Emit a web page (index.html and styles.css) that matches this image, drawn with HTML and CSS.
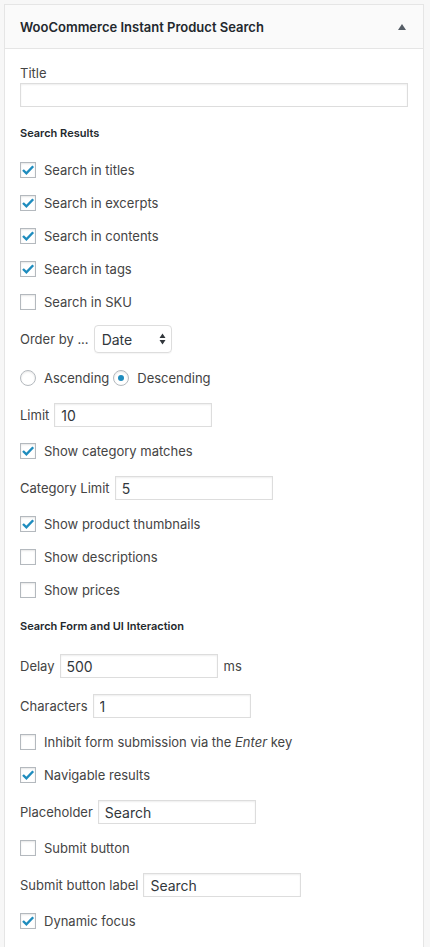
FILE: index.html
```html
<!DOCTYPE html>
<html lang="en">
<head>
<meta charset="utf-8">
<title>WooCommerce Instant Product Search</title>
<link rel="stylesheet" href="styles.css">
</head>
<body>
<div class="widget">
  <div class="widget-top">
    <h3 class="widget-title">WooCommerce Instant Product Search</h3>
    <svg class="toggle" width="8" height="6" viewBox="0 0 8 6"><path d="M0 6 L4 0 L8 6 Z" fill="#555d66"/></svg>
  </div>
  <div class="widget-inside">
    <div class="label-row">Title</div>
    <input class="text full" type="text" value="">

    <h4 class="section">Search Results</h4>
    <label class="row cb"><span class="box"><svg viewBox="0 0 16 16"><path d="M3 8 L6.4 11.4 L13.2 4.2"/></svg></span>Search in titles</label>
    <label class="row cb"><span class="box"><svg viewBox="0 0 16 16"><path d="M3 8 L6.4 11.4 L13.2 4.2"/></svg></span>Search in excerpts</label>
    <label class="row cb"><span class="box"><svg viewBox="0 0 16 16"><path d="M3 8 L6.4 11.4 L13.2 4.2"/></svg></span>Search in contents</label>
    <label class="row cb"><span class="box"><svg viewBox="0 0 16 16"><path d="M3 8 L6.4 11.4 L13.2 4.2"/></svg></span>Search in tags</label>
    <label class="row cb"><span class="box"></span>Search in SKU</label>

    <div class="row select-row">
      <span class="lbl">Order by ...</span>
      <div class="select"><span>Date</span>
        <svg width="7" height="12" viewBox="0 0 7 12"><path d="M0.5 5 L3.5 0.5 L6.5 5 Z M0.5 7 L3.5 11.5 L6.5 7 Z" fill="#32373c"/></svg>
      </div>
    </div>

    <div class="row radio-row">
      <span class="radio"></span><span class="rlabel">Ascending</span>
      <span class="radio checked"></span><span class="rlabel">Descending</span>
    </div>

    <div class="row field"><span class="lbl">Limit</span><input class="text short" type="text" value="10"></div>
    <label class="row cb"><span class="box"><svg viewBox="0 0 16 16"><path d="M3 8 L6.4 11.4 L13.2 4.2"/></svg></span>Show category matches</label>
    <div class="row field"><span class="lbl">Category Limit</span><input class="text short" type="text" value="5"></div>
    <label class="row cb"><span class="box"><svg viewBox="0 0 16 16"><path d="M3 8 L6.4 11.4 L13.2 4.2"/></svg></span>Show product thumbnails</label>
    <label class="row cb"><span class="box"></span>Show descriptions</label>
    <label class="row cb"><span class="box"></span>Show prices</label>

    <h4 class="section">Search Form and UI Interaction</h4>
    <div class="row field"><span class="lbl">Delay</span><input class="text short" type="text" value="500"><span class="unit">ms</span></div>
    <div class="row field"><span class="lbl">Characters</span><input class="text short" type="text" value="1"></div>
    <label class="row cb"><span class="box"></span>Inhibit form submission via the&nbsp;<em>Enter</em>&nbsp;key</label>
    <label class="row cb"><span class="box"><svg viewBox="0 0 16 16"><path d="M3 8 L6.4 11.4 L13.2 4.2"/></svg></span>Navigable results</label>
    <div class="row field"><span class="lbl">Placeholder</span><input class="text short" type="text" value="Search"></div>
    <label class="row cb"><span class="box"></span>Submit button</label>
    <div class="row field"><span class="lbl">Submit button label</span><input class="text short" type="text" value="Search"></div>
    <label class="row cb"><span class="box"><svg viewBox="0 0 16 16"><path d="M3 8 L6.4 11.4 L13.2 4.2"/></svg></span>Dynamic focus</label>
  </div>
</div>
</body>
</html>
```
FILE: styles.css
```css
* { box-sizing: border-box; }

body {
  margin: 0;
  background: #f7f7f7;
  font-family: Inter, "Liberation Sans", sans-serif;
  font-size: 13px;
  color: #444;
}

.widget {
  margin: 4px 6px 0 4px;
  border: 1px solid #e5e5e5;
  background: #fff;
}

.widget-top {
  height: 44px;
  background: #fafafa;
  border-bottom: 1px solid #e5e5e5;
  display: flex;
  align-items: center;
  justify-content: space-between;
  padding: 0 17px 0 15px;
}

.widget-title {
  margin: 0;
  font-size: 13px;
  font-weight: 600;
  color: #23282d;
  line-height: 18px;
}

.toggle { display: block; }

.widget-inside {
  padding: 0 15px 20px;
  display: flex;
  flex-direction: column;
}

.label-row {
  height: 18px;
  line-height: 18px;
  margin-top: 15px;
}

.text {
  height: 24px;
  border: 1px solid #ddd;
  box-shadow: inset 0 1px 2px rgba(0,0,0,.07);
  background: #fff;
  padding: 0 6px;
  font-family: Inter, "Liberation Sans", sans-serif;
  font-size: 14px;
  color: #32373c;
  outline: none;
  margin: 0;
}

.text.full {
  width: 100%;
  margin-top: 1px;
}

.text.short {
  width: 158px;
  margin-left: 5px;
}

.section {
  margin: 18px 0 0;
  height: 16px;
  line-height: 16px;
  font-size: 11px;
  font-weight: 600;
  color: #23282d;
}

.row {
  display: flex;
  align-items: center;
  margin-top: 13px;
  white-space: nowrap;
}

.cb { height: 20px; }

.section + .row { margin-top: 19px; }
.section + .field { margin-top: 20px; }

.field { height: 24px; margin-top: 15px; }
.field + .field { margin-top: 16px; }
.field + .cb { margin-top: 14px; }
.radio-row + .field { margin-top: 15px; }

.box {
  width: 16px;
  height: 16px;
  border: 1px solid #b4b9be;
  background: #fff;
  box-shadow: inset 0 1px 2px rgba(0,0,0,.1);
  margin-right: 8px;
  flex: none;
  position: relative;
}

.box svg {
  position: absolute;
  left: -1px;
  top: -1px;
  width: 16px;
  height: 16px;
}

.box svg path {
  fill: none;
  stroke: #1e8cbe;
  stroke-width: 2.4;
}

em { font-style: italic; }

.select-row { height: 28px; }

.select {
  margin-left: 5px;
  width: 78px;
  height: 28px;
  border: 1px solid #ddd;
  border-radius: 4px;
  box-shadow: 0 1px 1px rgba(0,0,0,.04);
  display: flex;
  align-items: center;
  justify-content: space-between;
  padding: 0 5px 0 7px;
  font-size: 14px;
  color: #32373c;
}

.select svg { display: block; }

.radio-row { height: 20px; margin-top: 15px; }

.radio {
  width: 16px;
  height: 16px;
  border: 1px solid #b4b9be;
  border-radius: 50%;
  background: #fff;
  box-shadow: inset 0 1px 2px rgba(0,0,0,.1);
  flex: none;
  display: flex;
  align-items: center;
  justify-content: center;
}

.radio.checked::before {
  content: "";
  width: 6px;
  height: 6px;
  border-radius: 50%;
  background: #1e8cbe;
}

.rlabel { margin: 0 4px 0 8px; }

.unit { margin-left: 6px; }
```
